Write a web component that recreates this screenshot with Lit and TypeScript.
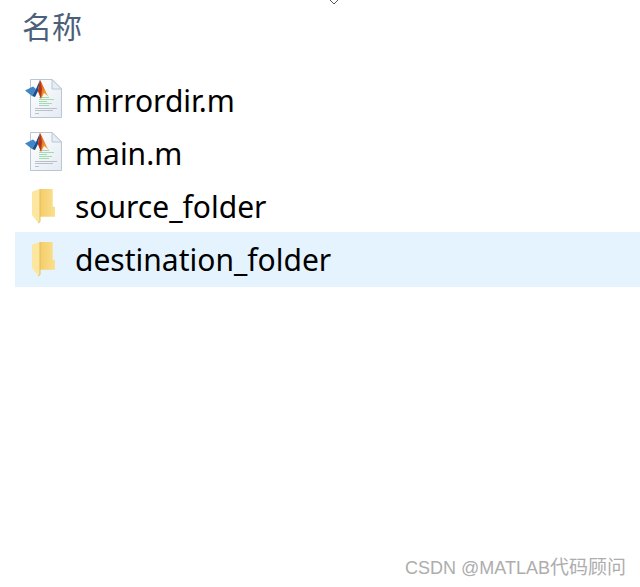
import {LitElement, css, html} from 'lit';
import {customElement} from 'lit/decorators.js';

const matlabIcon = html`<svg class="icon" width="40" height="45" viewBox="0 1 40 45">
  <defs>
    <linearGradient id="page" x1="0" y1="0" x2="1" y2="1">
      <stop offset="0" stop-color="#ffffff"/><stop offset="1" stop-color="#e4ebf3"/>
    </linearGradient>
    <linearGradient id="peak" x1="0" y1="0" x2="1" y2="1">
      <stop offset="0" stop-color="#c8401c"/><stop offset=".55" stop-color="#ee8a26"/><stop offset="1" stop-color="#f6c45a"/>
    </linearGradient>
  </defs>
  <path d="M5.500 2.500H27L36.500 12V40.500H5.500Z" fill="url(#page)" stroke="#b9c6d6"/>
  <path d="M27 2.500V12H36.500Z" fill="#e6edf5" stroke="#b9c6d6"/>
  <g fill="#a5dab0">
    <rect x="14" y="20" width="10" height="1"/><rect x="14" y="22" width="15" height="1"/>
    <rect x="14" y="24" width="8" height="1"/><rect x="14" y="26" width="13" height="1"/>
    <rect x="14" y="28" width="10" height="1"/>
  </g>
  <g fill="#b8c0ca">
    <rect x="10" y="31" width="22" height="1"/><rect x="10" y="33" width="18" height="1"/>
    <rect x="10" y="36" width="4" height="1"/>
  </g>
  <path d="M0 13.500L8 9.500L11 12L7 19Z" fill="#3f86c8"/>
  <path d="M7 19L11 12L15 3L13 14L10 20Z" fill="#1c4f8c"/>
  <path d="M15 3C17 6 19 11 21 15C22 17 23 19 24 20L19 16L16 22L13 14Z" fill="url(#peak)"/>
  <path d="M15 3L13 14L16 22L17 12Z" fill="#b5341a"/>
</svg>`;

const folderIcon = html`<svg class="icon" width="40" height="45" viewBox="0 1 40 45">
  <defs>
    <linearGradient id="back" x1="0" y1="0" x2="1" y2="0">
      <stop offset="0" stop-color="#f4cd68"/><stop offset="1" stop-color="#fae08e"/>
    </linearGradient>
  </defs>
  <path d="M15 6H27.700V23.700H30V33.700H15Z" fill="url(#back)"/>
  <path d="M7 8.700L15 6V38.700L13.300 40L7 32Z" fill="#fde6a0"/>
  <path d="M15 6V38.700L13.300 40" fill="none" stroke="#e3bd5c"/>
</svg>`;

const rows = [
  {name: 'mirrordir.m', icon: matlabIcon},
  {name: 'main.m', icon: matlabIcon},
  {name: 'source_folder', icon: folderIcon},
  {name: 'destination_folder', icon: folderIcon, selected: true},
];

@customElement('app-root')
export class AppRoot extends LitElement {
  static styles = css`
    :host {
      display: block;
      position: relative;
      width: 640px;
      height: 587px;
      background: #fff;
      overflow: hidden;
      font-family: "Noto Sans", "Noto Sans CJK SC", sans-serif;
    }
    .head {
      height: 74px;
      box-sizing: border-box;
      padding: 5px 0 0 22px;
      font-family: "Noto Sans CJK SC", sans-serif;
      font-size: 30px;
      line-height: 40px;
      color: #4c607a;
    }
    .sort {
      position: absolute;
      left: 329px;
      top: 0;
    }
    .row {
      display: flex;
      align-items: center;
      height: 53px;
      margin-left: 15px;
      padding-left: 10px;
      gap: 10px;
      font-size: 30px;
      color: #000;
    }
    .row.selected {
      margin-top: -1px;
      padding-top: 1px;
      padding-bottom: 1px;
      background: #e5f3ff;
    }
    .icon {
      flex: none;
    }
    .mark {
      position: absolute;
      right: 14px;
      bottom: 8px;
      font-family: "Liberation Sans", "Noto Sans CJK SC", sans-serif;
      font-size: 18px;
      color: #adadad;
    }
    .mark span {
      font-size: 19px;
    }
  `;

  render() {
    return html`
      <div class="head">名称</div>
      <svg class="sort" width="10" height="5" viewBox="0 0 10 5">
        <path d="M1 0L5 4L9 0" fill="none" stroke="#555"/>
      </svg>
      ${rows.map((row) => html`
        <div class="row ${row.selected ? 'selected' : ''}">${row.icon}<span>${row.name}</span></div>
      `)}
      <div class="mark">CSDN @MATLAB<span>代码顾问</span></div>
    `;
  }
}
